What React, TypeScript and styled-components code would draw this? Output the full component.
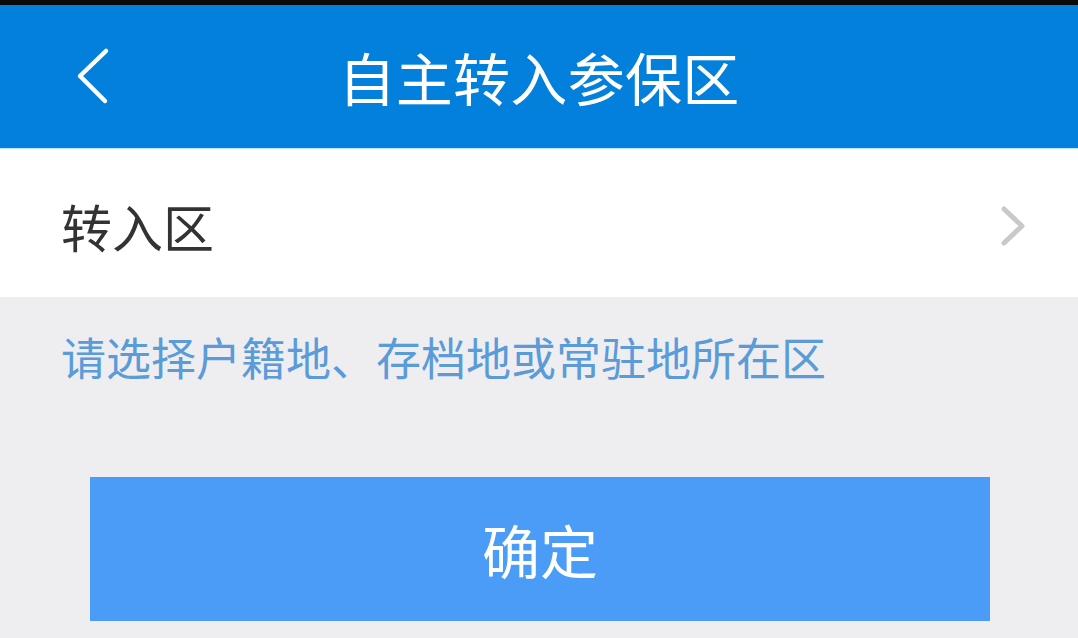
import React from "react";
import styled, { createGlobalStyle } from "styled-components";

const GlobalStyle = createGlobalStyle`
  html, body {
    margin: 0;
    padding: 0;
    background: #eeedf0;
  }
  body {
    font-family: "Noto Sans CJK SC", "Noto Sans", sans-serif;
  }
  * { box-sizing: border-box; }
`;

const Page = styled.div`
  width: 1078px;
  height: 638px;
  overflow: hidden;
  display: flex;
  flex-direction: column;
  background: #eeedf0;
`;

const StatusStrip = styled.div`
  height: 5px;
  background: #0a0a0a;
`;

const Header = styled.header`
  height: 144px;
  background: #0380dc;
  display: grid;
  grid-template-columns: 200px 1fr 200px;
  align-items: center;
  border-bottom: 1px solid #bfe6ff;
`;

const BackButton = styled.button`
  border: 0;
  background: none;
  padding: 0 0 0 74px;
  height: 60px;
  display: flex;
  align-items: center;
  cursor: pointer;
`;

const Title = styled.h1`
  margin: 0;
  text-align: center;
  color: #ffffff;
  font-size: 57px;
  font-weight: 400;
  line-height: 1;
  letter-spacing: 0.3px;
`;

const Row = styled.div`
  height: 148px;
  background: #ffffff;
  display: flex;
  align-items: center;
  justify-content: space-between;
  padding: 6px 50px 0 61px;
`;

const RowLabel = styled.span`
  font-size: 51px;
  color: #333333;
  line-height: 1;
`;

const Hint = styled.p`
  margin: 0;
  padding: 35px 0 0 61px;
  height: 180px;
  font-size: 45px;
  line-height: 50px;
  color: #5a9bd8;
`;

const ConfirmButton = styled.button`
  margin: 0 88px 0 90px;
  height: 144px;
  border: 0;
  background: #4a9cf6;
  color: #ffffff;
  font-family: "Noto Sans CJK SC", "Noto Sans", sans-serif;
  font-size: 58px;
  font-weight: 400;
  line-height: 1;
  display: flex;
  align-items: center;
  justify-content: center;
  padding: 0;
  cursor: pointer;
`;

const BackIcon = () => (
  <svg width="40" height="60" viewBox="0 0 40 60">
    <polyline
      points="32,4 6,29 31,54"
      fill="none"
      stroke="#ffffff"
      strokeWidth="4.5"
      strokeLinecap="round"
      strokeLinejoin="round"
    />
  </svg>
);

const ChevronRight = () => (
  <svg width="30" height="44" viewBox="0 0 30 44">
    <polyline
      points="6,5 24,22 6,39"
      fill="none"
      stroke="#c9c9c9"
      strokeWidth="5"
      strokeLinecap="round"
      strokeLinejoin="round"
    />
  </svg>
);

export default function App() {
  return (
    <Page>
      <GlobalStyle />
      <StatusStrip />
      <Header>
        <BackButton aria-label="返回">
          <BackIcon />
        </BackButton>
        <Title>自主转入参保区</Title>
        <div />
      </Header>
      <Row>
        <RowLabel>转入区</RowLabel>
        <ChevronRight />
      </Row>
      <Hint>请选择户籍地、存档地或常驻地所在区</Hint>
      <ConfirmButton>确定</ConfirmButton>
    </Page>
  );
}
